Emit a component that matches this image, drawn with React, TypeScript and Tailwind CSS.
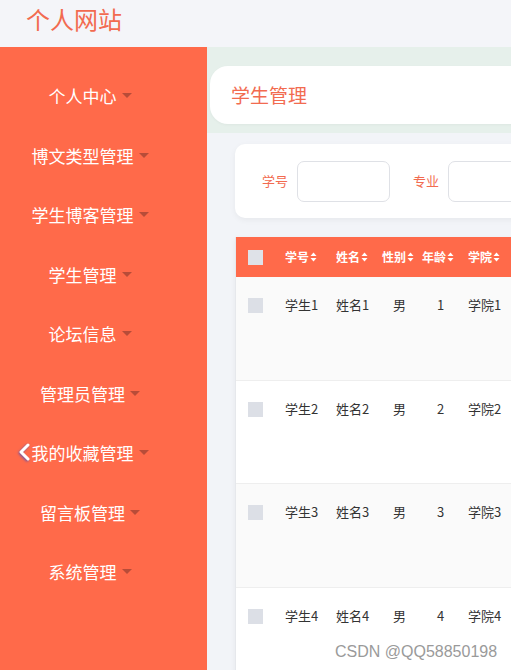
import React from "react";

const menus = [
  "个人中心",
  "博文类型管理",
  "学生博客管理",
  "学生管理",
  "论坛信息",
  "管理员管理",
  "我的收藏管理",
  "留言板管理",
  "系统管理",
];

const rows = [1, 2, 3, 4];

function SortIcon() {
  return (
    <svg width="7" height="10" viewBox="0 0 7 10" className="ml-[1px]">
      <path d="M3.5 0.5 L6.5 4 L0.5 4 Z" fill="white" />
      <path d="M3.5 9.5 L6.5 6 L0.5 6 Z" fill="white" />
    </svg>
  );
}

function Caret() {
  return (
    <span className="ml-[5px] inline-block h-0 w-0 border-x-[5px] border-t-[5px] border-x-transparent border-t-[#b84c38]" />
  );
}

export default function App() {
  return (
    <div className="relative flex h-[670px] w-[511px] flex-col overflow-hidden bg-[#f2f4f8] font-['Microsoft_YaHei','Noto_Sans_CJK_SC',sans-serif]">
      {/* header */}
      <div className="flex h-[47px] shrink-0 items-start bg-[#f4f5f9] pl-[26px] pt-[7px]">
        <span className="text-[24px] leading-[24px] text-[#f26b50]">个人网站</span>
      </div>

      <div className="flex min-h-0 flex-1">
        {/* sidebar */}
        <div className="w-[207px] shrink-0 bg-[#ff6a4a] pr-[27px] pt-[19px]">
          {menus.map((m) => (
            <div
              key={m}
              className="relative flex h-[59.5px] items-center justify-center text-[17px] text-white"
            >
              {m === "我的收藏管理" && (
                <svg
                  width="14"
                  height="18"
                  viewBox="0 0 14 18"
                  className="absolute left-[17px] top-[20px] drop-shadow-[-1px_1px_1px_rgba(60,80,200,0.7)]"
                >
                  <path
                    d="M11 2 L4 9 L11 16"
                    fill="none"
                    stroke="white"
                    strokeWidth="3"
                    strokeLinecap="round"
                    strokeLinejoin="round"
                  />
                </svg>
              )}
              <span>{m}</span>
              <Caret />
            </div>
          ))}
        </div>

        {/* main */}
        <div className="min-w-0 flex-1 overflow-hidden">
          <div className="w-[700px] bg-[#e6f0eb] pb-[9px] pl-[3px] pt-[19px]">
            <div className="flex h-[58px] items-center rounded-[18px] bg-white pl-[21px] text-[19px] text-[#f26b50] shadow-[0_1px_3px_rgba(0,0,0,0.04)]">
              学生管理
            </div>
          </div>

          <div className="w-[700px] pl-[28px] pt-[11px]">
            <div className="flex h-[74px] items-center rounded-[10px] bg-white pl-[27px] shadow-[0_2px_6px_rgba(0,0,0,0.05)]">
              <span className="text-[13px] text-[#f26b50]">学号</span>
              <div className="ml-[9px] h-[41px] w-[93px] rounded-[7px] border border-[#dfe1e6]" />
              <span className="ml-[23px] text-[13px] text-[#f26b50]">专业</span>
              <div className="ml-[9px] h-[41px] w-[200px] rounded-[7px] border border-[#dfe1e6]" />
            </div>

            <div className="mt-[19px] border-l border-[#e6e8ec] shadow-[0_2px_6px_rgba(0,0,0,0.05)]">
              <div className="flex h-[40px] items-center bg-[#ff6a4a] text-[12px] font-bold text-white">
                <div className="w-[49px] pl-[12px]">
                  <div className="h-[15px] w-[15px] bg-[#dfe2e8]" />
                </div>
                <div className="flex w-[51px] items-center">学号<SortIcon /></div>
                <div className="flex w-[46px] items-center">姓名<SortIcon /></div>
                <div className="flex w-[40px] items-center">性别<SortIcon /></div>
                <div className="flex w-[46px] items-center">年龄<SortIcon /></div>
                <div className="flex w-[60px] items-center">学院<SortIcon /></div>
              </div>

              {rows.map((n) => (
                <div
                  key={n}
                  className={`flex h-[103.5px] items-start border-b border-[#eeeeee] pt-[20px] text-[13px] leading-[16px] text-[#333] ${
                    n % 2 === 1 ? "bg-[#fafafa]" : "bg-white"
                  }`}
                >
                  <div className="w-[49px] pl-[12px] pt-[1px]">
                    <div className="h-[15px] w-[15px] bg-[#dcdfe6]" />
                  </div>
                  <div className="w-[51px]">学生{n}</div>
                  <div className="w-[46px]">姓名{n}</div>
                  <div className="w-[40px] pl-[11px]">男</div>
                  <div className="w-[46px] pl-[15px]">{n}</div>
                  <div className="w-[60px]">学院{n}</div>
                </div>
              ))}
            </div>
          </div>
        </div>
      </div>

      <div className="absolute bottom-[8px] left-[335px] text-[16px] leading-[20px] text-[#9a9a9a] font-['Liberation_Sans',sans-serif]">
        CSDN @QQ58850198
      </div>
    </div>
  );
}
